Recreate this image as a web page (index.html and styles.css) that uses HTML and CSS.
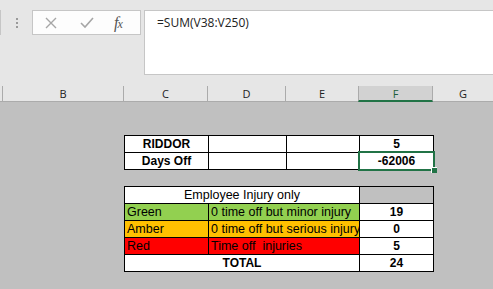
FILE: index.html
```html
<!DOCTYPE html>
<html>
<head>
<meta charset="utf-8">
<link rel="stylesheet" href="styles.css">
</head>
<body>
<div class="app">
  <div class="fbar">
    <div class="namebox-edge"></div>
    <div class="grip"><span></span><span></span><span></span></div>
    <div class="fbtns">
      <svg class="ic" width="14" height="14" viewBox="0 0 14 14"><path d="M2 2 L12 12 M12 2 L2 12" stroke="#a6a6a6" stroke-width="1.4" fill="none"/></svg>
      <svg class="ic" width="16" height="14" viewBox="0 0 16 14"><path d="M2 7 L6 11 L14 2" stroke="#a6a6a6" stroke-width="1.6" fill="none"/></svg>
      <span class="fx"><i>f</i><i class="x">x</i></span>
    </div>
    <div class="finput">=SUM(V38:V250)</div>
  </div>
  <div class="colheads">
    <div class="ch chA"></div>
    <div class="ch chB">B</div>
    <div class="ch chC">C</div>
    <div class="ch chD">D</div>
    <div class="ch chE">E</div>
    <div class="ch chF sel">F</div>
    <div class="ch chG">G</div>
  </div>
  <div class="sheet">
    <div class="tbl t1">
      <div class="c b ctr">RIDDOR</div>
      <div class="c"></div>
      <div class="c"></div>
      <div class="c b ctr">5</div>
      <div class="c b ctr">Days Off</div>
      <div class="c"></div>
      <div class="c"></div>
      <div class="c b ctr active">-62006<span class="handle"></span></div>
    </div>
    <div class="tbl t2">
      <div class="c span3 ctr">Employee Injury only</div>
      <div class="c grey"></div>
      <div class="c green">Green</div>
      <div class="c span2 green">0 time off but minor injury</div>
      <div class="c b ctr">19</div>
      <div class="c amber">Amber</div>
      <div class="c span2 amber">0 time off but serious injury</div>
      <div class="c b ctr">0</div>
      <div class="c red">Red</div>
      <div class="c span2 red">Time off&nbsp; injuries</div>
      <div class="c b ctr">5</div>
      <div class="c span3 b ctr">TOTAL</div>
      <div class="c b ctr">24</div>
    </div>
  </div>
</div>
</body>
</html>
```
FILE: styles.css
```css
* { box-sizing: border-box; }
html, body { margin: 0; padding: 0; }
body { width: 493px; height: 289px; overflow: hidden; background: #c0c0c0; }
.app { width: 493px; height: 289px; display: flex; flex-direction: column; }

.fbar { height: 86px; background: #e6e6e6; display: flex; align-items: flex-start; padding-top: 10px; position: relative; }
.namebox-edge { width: 1px; height: 25px; background: #c6c6c6; }
.grip { width: 31px; height: 25px; display: flex; flex-direction: column; align-items: center; justify-content: center; gap: 2px; }
.grip span { width: 2px; height: 2px; background: #9a9a9a; }
.fbtns { width: 109px; height: 25px; background: #fdfdfd; border: 1px solid #c6c6c6; display: flex; align-items: center; padding-left: 11px; gap: 0; }
.fbtns .ic:nth-child(1) { margin-right: 21px; }
.fbtns .ic:nth-child(2) { margin-right: 19px; }
.fx { font-family: "Liberation Serif", serif; font-size: 16px; color: #555; font-style: italic; letter-spacing: -1px; }
.fx i { font-style: italic; }
.fx .x { font-size: 12px; }
.finput { margin-left: 3px; flex: 1; height: 65px; background: #ffffff; border: 1px solid #c6c6c6; border-right: none; font-family: "Open Sans", "Noto Sans", sans-serif; font-size: 12px; color: #222; padding: 4px 0 0 12px; line-height: 16px; }

.colheads { height: 16px; background: #e6e6e6; border-bottom: 1px solid #ababab; display: flex; font-family: "Open Sans", "Noto Sans", sans-serif; font-size: 11px; color: #222; }
.ch { height: 15px; border-right: 1px solid #ababab; display: flex; align-items: center; justify-content: center; line-height: 15px; }
.chA { width: 3px; }
.chB { width: 121px; }
.chC { width: 84px; }
.chD { width: 78px; }
.chE { width: 73px; }
.chF { width: 74px; }
.chG { flex: 1; border-right: none; }
.ch.sel { background: #d2d2d2; color: #1e5e3a; border-bottom: 2px solid #217346; height: 16px; margin-bottom: -1px; border-left: 1px solid #ababab; margin-left: -1px; width: 75px; }

.sheet { flex: 1; padding: 33px 0 0 124px; display: flex; flex-direction: column; gap: 16px; }
.tbl { display: grid; grid-template-columns: 83px 77px 72px 73px; grid-auto-rows: 16px; gap: 1px; padding: 1px; background: #000; width: 310px; font-family: "Liberation Sans", Arial, sans-serif; font-size: 12.5px; color: #000; }
.c { background: #fff; line-height: 17px; padding-left: 2px; white-space: nowrap; overflow: hidden; position: relative; }
.c.ctr { text-align: center; padding-left: 0; }
.c.b { font-weight: bold; font-size: 12px; }
.span3 { grid-column: span 3; }
.span2 { grid-column: span 2; }
.green { background: #92d050; }
.amber { background: #ffc000; }
.red { background: #ff0000; }
.grey { background: #c0c0c0; }
.c.active { overflow: visible; outline: 2px solid #217346; outline-offset: 0; z-index: 2; }
.handle { position: absolute; right: -4px; bottom: -4px; width: 5px; height: 5px; background: #217346; border: 1px solid #fff; border-width: 1px 0 0 1px; box-sizing: content-box; }
```
